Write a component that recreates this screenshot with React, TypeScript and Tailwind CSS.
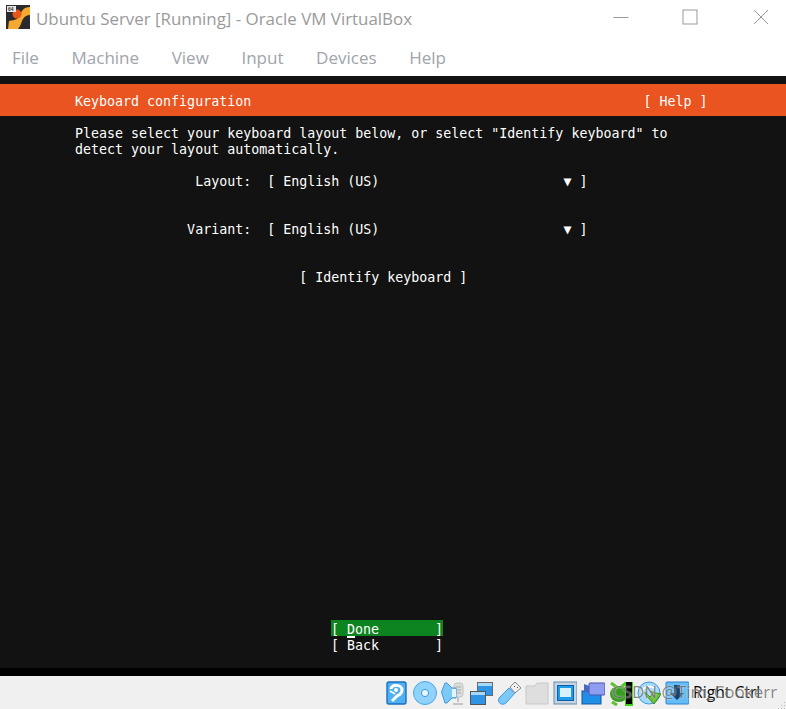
import type { ReactNode } from 'react';

const Logo = () => (
  <svg width="24" height="24" viewBox="0 0 24 24" className="shrink-0">
    <rect width="24" height="24" fill="#2b2b2e" />
    <path d="M24 2 C17 2 16 6 14 10 C12 14 10 15 3 16 L2 24 L12 24 C15 21 15 17 17 14 C19 11 21 10 24 10 Z" fill="#f7a830" />
    <circle cx="11" cy="9" r="4.5" fill="#e8561c" />
    <rect x="1" y="1" width="9" height="6" fill="#e8e8e8" />
    <text x="2" y="6" fontSize="5" fontWeight="700" fontFamily="Liberation Sans, sans-serif" fill="#333">64</text>
  </svg>
);

const Shell = ({ children }: { children: ReactNode }) => (
  <svg width="24" height="26" viewBox="0 0 24 26" className="shrink-0">
    {children}
  </svg>
);

const StatusIcons = () => (
  <div className="flex items-center gap-[4px]">
    {/* hard disk */}
    <Shell>
      <rect x="2" y="2" width="19" height="22" rx="2" fill="#4fb0f2" stroke="#1a6fc0" strokeWidth="1.4" />
      <path d="M6 9 C6 4 17 4 17 10 C17 14 14 15 12 16 L7 21" fill="none" stroke="#fff" strokeWidth="3" />
      <circle cx="11" cy="10" r="2" fill="#fff" />
      <path d="M5 11 L10 14" stroke="#fff" strokeWidth="2" />
    </Shell>
    {/* optical */}
    <Shell>
      <circle cx="12" cy="13" r="11.5" fill="#8fd2fa" stroke="#4ba6e8" />
      <circle cx="12" cy="13" r="3.6" fill="#e8f6ff" stroke="#3d9ae0" />
    </Shell>
    {/* audio */}
    <Shell>
      <rect x="13" y="3" width="9" height="14" rx="3" fill="#dcdcdc" stroke="#c2c2c2" />
      <path d="M15 7 H20 M15 10 H20 M15 13 H20" stroke="#a8a8a8" />
      <path d="M17 17 V22 M12 24 H22" stroke="#c4c4c4" strokeWidth="2" />
      <path d="M0.5 12 L4 3 H6 L11 8 H15 V18 H11 L6 23 H4 Z" fill="#7cc8f7" stroke="#3d9ae0" />
      <rect x="11" y="9" width="4" height="8" fill="#e4f4fe" />
    </Shell>
    {/* network */}
    <Shell>
      <rect x="8.5" y="2.5" width="15" height="13" fill="#2f93e6" stroke="#6b6b6b" />
      <rect x="1.5" y="11.5" width="15" height="13" fill="#2f93e6" stroke="#555" />
      <rect x="2" y="12" width="14" height="3" fill="#a8d8f8" />
      <rect x="9" y="3" width="14" height="3" fill="#a8d8f8" />
    </Shell>
    {/* usb */}
    <Shell>
      <path d="M2 18 L12 8 L18 13 L9 23 C5 26 0 23 2 18 Z" fill="#7cc8f7" stroke="#3d9ae0" />
      <path d="M13 7 L18 2 L24 8 L18 13 Z" fill="#f0f0f0" stroke="#888" />
      <path d="M17 6 L18 7 M20 7 L21 8" stroke="#555" />
    </Shell>
    {/* shared folder */}
    <Shell>
      <path d="M1 6 H10 L12 3 H23 V24 H1 Z" fill="#dedede" stroke="#c8c8c8" />
    </Shell>
    {/* display */}
    <Shell>
      <rect x="1" y="2" width="23" height="22" fill="#c4d4e2" stroke="#6a8ba8" />
      <rect x="4.5" y="5.5" width="16" height="15" fill="#1e9be8" stroke="#0e5fa8" />
      <rect x="7" y="8" width="11" height="9" fill="#d9f0fd" />
    </Shell>
    {/* video capture */}
    <Shell>
      <rect x="1" y="11" width="19" height="13" fill="#1f8fe8" stroke="#14559c" />
      <rect x="8" y="3" width="16" height="12" rx="1" fill="#8f9df0" stroke="#4a55b0" />
      <path d="M8 6 L3 4 V13 L8 11 Z" fill="#4a68c0" />
    </Shell>
    {/* turtle */}
    <Shell>
      <ellipse cx="10" cy="14" rx="9" ry="8" fill="#3b9a22" />
      <path d="M2 3 L9 8 M11 8 L17 3 M3 22 L8 25" stroke="#5dc02e" strokeWidth="3" />
      <rect x="16" y="2" width="8" height="24" fill="#39d414" />
      <rect x="17" y="2" width="6" height="22" fill="#000" />
    </Shell>
    {/* mouse integration */}
    <Shell>
      <circle cx="12" cy="13" r="11" fill="#a4d9f9" stroke="#3d9ae0" />
      <path d="M5 13 C5 7 12 5 17 8" fill="none" stroke="#fff" strokeWidth="2" />
      <path d="M8 12 L13 17 L17 12 L14 12 L24 14 L17 24 L8 14 Z" fill="#6cc23a" stroke="#3b8a1e" />
    </Shell>
    {/* keyboard capture */}
    <Shell>
      <rect x="1" y="2" width="23" height="22" rx="1" fill="#65bdf5" stroke="#2a82d0" />
      <path d="M9 5 H15 V13 H19 L12 20 L5 13 H9 Z" fill="#15406e" />
    </Shell>
  </div>
);

// one terminal row, the console font sits 2px low in its 16px cell
const Row = ({ children, className = '' }: { children: ReactNode; className?: string }) => (
  <div className={`h-[16px] ${className}`}>
    <div className="translate-y-[2px]">{children}</div>
  </div>
);

export default function App() {
  return (
    <div className="w-[786px] h-[709px] flex flex-col overflow-hidden bg-white relative">
      {/* window title */}
      <div className="h-[40px] flex items-start pt-[5px] pl-[6px] bg-white">
        <Logo />
        <span className="ml-[6px] mt-[2px] leading-[24px] text-[16.9px] text-[#9a9a9a] font-['Open_Sans',sans-serif] whitespace-pre">
          Ubuntu Server [Running] - Oracle VM VirtualBox
        </span>
        <div className="ml-auto flex items-center h-[24px]">
          <svg width="16" height="16" viewBox="0 0 16 16" className="mr-[53px]">
            <path d="M0.5 8.5 H15.5" stroke="#999" />
          </svg>
          <svg width="16" height="16" viewBox="0 0 16 16" className="mr-[55px]">
            <rect x="1" y="1" width="14" height="14" fill="none" stroke="#999" />
          </svg>
          <svg width="16" height="16" viewBox="0 0 16 16" className="mr-[17px]">
            <path d="M1 1 L15 15 M15 1 L1 15" stroke="#999" />
          </svg>
        </div>
      </div>

      {/* menu bar */}
      <div className="h-[36px] flex items-center pl-[12px] gap-[32.6px] text-[17px] text-[#a0a4ab] font-['Open_Sans',sans-serif]">
        <span>File</span>
        <span>Machine</span>
        <span>View</span>
        <span>Input</span>
        <span>Devices</span>
        <span>Help</span>
      </div>

      {/* vm screen */}
      <div className="h-[592px] bg-[#121212] text-white font-['DejaVu_Sans_Mono',monospace] text-[13.3px] leading-[16px] whitespace-pre flex flex-col">
        <div className="mt-[8px] pl-[3px] bg-[#e95420] py-[8px]">
          <Row>{"         Keyboard configuration                                                 [ Help ]"}</Row>
        </div>
        <div className="pl-[3px] pt-[8px]">
          <Row>{"         Please select your keyboard layout below, or select \"Identify keyboard\" to"}</Row>
          <Row>{"         detect your layout automatically."}</Row>
          <Row className="mt-[16px]">{"                        Layout:  [ English (US)                       ▼ ]"}</Row>
          <Row className="mt-[32px]">{"                       Variant:  [ English (US)                       ▼ ]"}</Row>
          <Row className="mt-[32px]">{"                                     [ Identify keyboard ]"}</Row>
          <div className="mt-[336px] pl-[328px]">
            <Row className="w-[112px] bg-[#0e8420]">
              {"[ "}<span className="underline decoration-2 underline-offset-2">D</span>{"one       ]"}
            </Row>
            <Row>{"[ Back       ]"}</Row>
          </div>
        </div>
      </div>

      <div className="h-[8px] bg-black" />

      {/* status bar */}
      <div className="flex-1 bg-[#f0f0f0] flex items-center pl-[385px] relative">
        <StatusIcons />
        <span className="ml-[4px] text-[15.7px] text-black font-['Open_Sans',sans-serif] whitespace-pre">Right Ctrl</span>
        <span className="absolute left-[612px] top-[3px] text-[17px] text-[#555555b3] [text-shadow:0_0_2px_#ffffffcc] font-['Open_Sans',sans-serif] whitespace-pre">CSDN @Tim_Cookerr</span>
        <svg width="8" height="8" viewBox="0 0 8 8" className="absolute right-0 bottom-0">
          <path d="M6 1 H7 V2 H6 Z M3 4 H4 V5 H3 Z M6 4 H7 V5 H6 Z M0 7 H1 V8 H0 Z M3 7 H4 V8 H3 Z M6 7 H7 V8 H6 Z" fill="#b4b4b4" />
        </svg>
      </div>
    </div>
  );
}
